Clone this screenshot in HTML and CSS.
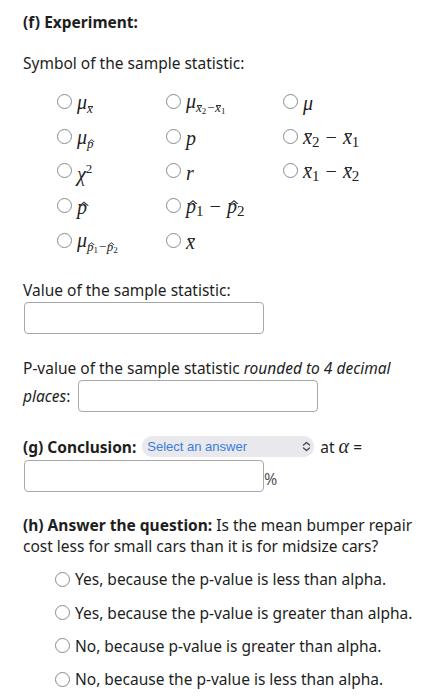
FILE: index.html
```html
<!DOCTYPE html>
<html lang="en">
<head>
    <meta charset="UTF-8">
    <meta name="viewport" content="width=device-width, initial-scale=1.0">
    <title>Experiment</title>
    <link rel="stylesheet" href="styles.css">
</head>
<body>
    <div class="page">
        <p class="part-title"><b>(f) Experiment:</b></p>

        <p class="label symbol-label">Symbol of the sample statistic:</p>
        <div class="symbol-grid">
            <label class="choice"><span class="radio"></span><i class="math">μ<sub><span class="bar">x</span></sub></i></label>
            <label class="choice"><span class="radio"></span><i class="math">μ<sub><span class="bar">x</span><sub>2</sub>−<span class="bar">x</span><sub>1</sub></sub></i></label>
            <label class="choice"><span class="radio"></span><i class="math">μ</i></label>

            <label class="choice"><span class="radio"></span><i class="math">μ<sub><span class="hat">p</span></sub></i></label>
            <label class="choice"><span class="radio"></span><i class="math">p</i></label>
            <label class="choice"><span class="radio"></span><i class="math"><span class="bar">x</span><span class="idx">2</span> − <span class="bar">x</span><span class="idx">1</span></i></label>

            <label class="choice"><span class="radio"></span><i class="math">χ<sup class="pow">2</sup></i></label>
            <label class="choice"><span class="radio"></span><i class="math">r</i></label>
            <label class="choice"><span class="radio"></span><i class="math"><span class="bar">x</span><span class="idx">1</span> − <span class="bar">x</span><span class="idx">2</span></i></label>

            <label class="choice"><span class="radio"></span><i class="math"><span class="hat">p</span></i></label>
            <label class="choice"><span class="radio"></span><i class="math"><span class="hat">p</span><span class="idx">1</span> − <span class="hat">p</span><span class="idx">2</span></i></label>
            <span></span>

            <label class="choice"><span class="radio"></span><i class="math">μ<sub><span class="hat">p</span><sub>1</sub>−<span class="hat">p</span><sub>2</sub></sub></i></label>
            <label class="choice"><span class="radio"></span><i class="math"><span class="bar">x</span></i></label>
        </div>

        <p class="label value-label">Value of the sample statistic:</p>
        <div class="text-box value-box"></div>

        <p class="label pvalue-label">P-value of the sample statistic <i>rounded to 4 decimal</i></p>
        <div class="inline-row">
            <span><i>places</i>:</span>
            <div class="text-box"></div>
        </div>

        <div class="conclusion-row">
            <b>(g) Conclusion:</b>
            <span class="select">
                <span class="select-text">Select an answer</span>
                <svg class="chevron" width="9" height="11" viewBox="0 0 9 11">
                    <path d="M1.5 4 L4.5 1.5 L7.5 4 M1.5 7 L4.5 9.5 L7.5 7" fill="none" stroke="#4a4a52" stroke-width="1.4" stroke-linecap="round" stroke-linejoin="round"/>
                </svg>
            </span>
            <span>at <i class="alpha">α</i> =</span>
        </div>
        <div class="percent-row">
            <div class="text-box"></div>
            <span class="percent">%</span>
        </div>

        <p class="question"><b>(h) Answer the question:</b> Is the mean bumper repair cost less for small cars than it is for midsize cars?</p>
        <div class="answers">
            <label class="answer"><span class="radio"></span>Yes, because the p-value is less than alpha.</label>
            <label class="answer"><span class="radio"></span>Yes, because the p-value is greater than alpha.</label>
            <label class="answer"><span class="radio"></span>No, because p-value is greater than alpha.</label>
            <label class="answer"><span class="radio"></span>No, because the p-value is less than alpha.</label>
        </div>
    </div>
</body>
</html>
```

FILE: styles.css
```css
body {
    margin: 0;
    background-color: #fff;
    color: #1e1e1e;
    font-family: "Noto Sans", "DejaVu Sans", sans-serif;
    font-size: 15.5px;
}

.page {
    padding: 12px 0 0 23px;
}

p {
    margin: 0;
    line-height: 20px;
}

.symbol-label {
    margin-top: 21px;
}

/* Radio grid */
.symbol-grid {
    display: grid;
    grid-template-columns: 109px 117px auto;
    grid-auto-rows: 34.7px;
    margin: 11px 0 0 34px;
}

.choice, .answer {
    display: flex;
    align-items: center;
    gap: 5px;
}

.radio {
    width: 13px;
    height: 13px;
    border: 1.6px solid #8a8a8a;
    border-radius: 50%;
    flex: none;
}

/* Math symbols */
.choice .math {
    font-family: "Liberation Serif", "DejaVu Serif", serif;
    font-style: italic;
    font-size: 20px;
    line-height: 1;
    color: #222;
    padding-top: 4px;
}

.math sub {
    font-size: 13px;
    vertical-align: -4px;
}

.math sub sub {
    font-size: 9px;
    font-style: normal;
    vertical-align: -2px;
}

.math .idx {
    font-style: normal;
    font-size: 15px;
    vertical-align: -3px;
}

.math .pow {
    font-style: normal;
    font-size: 13px;
    vertical-align: 8px;
}

.bar, .hat {
    position: relative;
    display: inline-block;
}

.bar::after {
    content: "";
    position: absolute;
    left: 0.1em;
    right: 0;
    top: 0.3em;
    border-top: 1px solid #333;
}

.hat::after {
    content: "";
    position: absolute;
    left: 0.1em;
    top: 0.2em;
    width: 0.5em;
    height: 0.22em;
    background-color: #333;
    clip-path: polygon(0 100%, 50% 0, 100% 100%, 82% 100%, 50% 35%, 18% 100%);
}

/* Text inputs */
.value-label {
    margin-top: 23px;
}

.text-box {
    width: 238px;
    height: 30px;
    border: 1px solid #a8a8a8;
    border-radius: 4px;
    background-color: #fff;
}

.value-box {
    margin: 2px 0 0 1px;
}

.pvalue-label {
    margin-top: 24px;
}

.inline-row {
    display: flex;
    align-items: center;
    gap: 8px;
    margin-top: 2px;
}

/* Conclusion */
.conclusion-row {
    display: flex;
    align-items: center;
    gap: 6px;
    margin-top: 24px;
    height: 21px;
}

.select {
    display: flex;
    align-items: center;
    justify-content: space-between;
    width: 172px;
    height: 21px;
    box-sizing: border-box;
    padding: 0 3px 0 5px;
    background-color: #e8e8ed;
    border-radius: 10px;
    font-family: "Liberation Sans", Arial, sans-serif;
    font-size: 13px;
    color: #3b7ddb;
}

.alpha {
    font-family: "Liberation Serif", "DejaVu Serif", serif;
    font-size: 20px;
}

.percent-row {
    display: flex;
    align-items: center;
    margin: 3px 0 0 1px;
}

.percent {
    font-size: 16px;
    color: #555;
    letter-spacing: -1px;
    padding-top: 6px;
}

/* Question */
.question {
    margin-top: 23px;
    line-height: 21px;
    width: 392px;
}

.answers {
    display: grid;
    grid-auto-rows: 33.4px;
    margin: 5px 0 0 32px;
}
```
